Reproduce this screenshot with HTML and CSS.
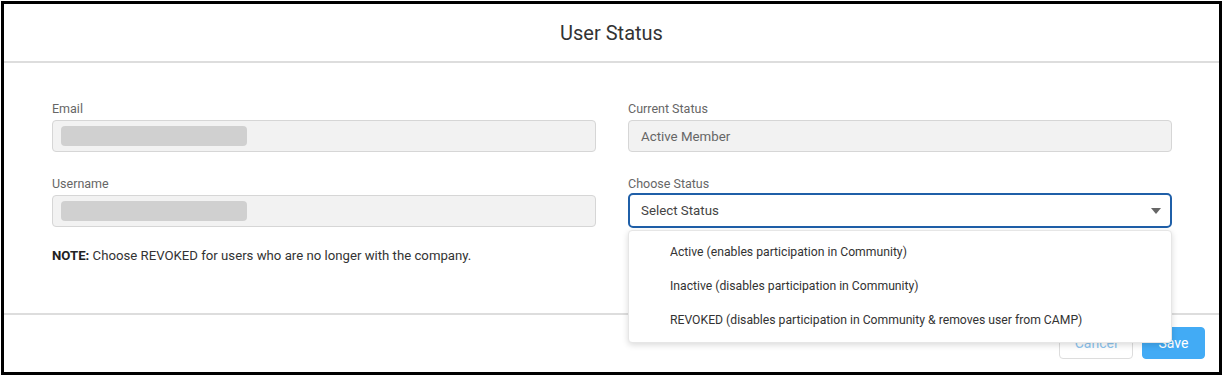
FILE: index.html
```html
<!DOCTYPE html>
<html lang="en">
<head>
    <meta charset="UTF-8">
    <meta name="viewport" content="width=device-width, initial-scale=1.0">
    <title>User Status</title>
    <link rel="stylesheet" href="styles.css">
</head>
<body>
    <div class="modal">
        <div class="modal-header">
            <h2>User Status</h2>
        </div>
        <div class="modal-body">
            <div class="form-grid">
                <div class="field">
                    <label>Email</label>
                    <div class="input readonly"><span class="redacted"></span></div>
                </div>
                <div class="field">
                    <label>Current Status</label>
                    <div class="input readonly">Active Member</div>
                </div>
                <div class="field">
                    <label>Username</label>
                    <div class="input readonly"><span class="redacted"></span></div>
                </div>
                <div class="field">
                    <label>Choose Status</label>
                    <div class="select-wrap">
                        <div class="select">
                            <span>Select Status</span>
                            <span class="caret"></span>
                        </div>
                        <ul class="menu">
                            <li>Active (enables participation in Community)</li>
                            <li>Inactive (disables participation in Community)</li>
                            <li>REVOKED (disables participation in Community &amp; removes user from CAMP)</li>
                        </ul>
                    </div>
                </div>
                <p class="note"><b>NOTE:</b> Choose REVOKED for users who are no longer with the company.</p>
            </div>
        </div>
        <div class="modal-footer">
            <button class="btn btn-cancel">Cancel</button>
            <button class="btn btn-save">Save</button>
        </div>
    </div>
</body>
</html>
```

FILE: styles.css
```css
body {
    margin: 0;
    padding: 1px;
    font-family: Roboto, "Liberation Sans", Arial, sans-serif;
    background: #fff;
    color: #333;
}
.modal {
    width: 1221px;
    height: 374px;
    box-sizing: border-box;
    border: 3px solid #000;
    display: flex;
    flex-direction: column;
}
.modal-header {
    height: 57px;
    border-bottom: 2px solid #ddd;
    display: flex;
    align-items: center;
    justify-content: center;
}
.modal-header h2 {
    margin: 0;
    font-size: 20px;
    font-weight: 400;
    color: #333;
}
.modal-body {
    height: 252px;
    box-sizing: border-box;
    padding: 38px 47px 0 48px;
    border-bottom: 2px solid #ddd;
}
.form-grid {
    display: grid;
    grid-template-columns: 544px 544px;
    column-gap: 32px;
    row-gap: 24px;
}
.field label {
    display: block;
    font-size: 12.5px;
    line-height: 16px;
    color: #666;
    margin-bottom: 3px;
}
.input {
    height: 32px;
    box-sizing: border-box;
    border: 1px solid #d6d6d6;
    border-radius: 4px;
    padding: 0 12px 0 8px;
    display: flex;
    align-items: center;
    font-size: 13.3px;
    color: #666;
}
.readonly {
    background: #f2f2f2;
}
.field:nth-child(2) .input {
    padding-left: 12px;
}
.redacted {
    display: block;
    width: 186px;
    height: 20px;
    background: #d0d0d0;
    border-radius: 4px;
}
.select-wrap {
    position: relative;
    margin-top: -2px;
}
.select {
    height: 35px;
    box-sizing: border-box;
    border: 2px solid #1f5fa8;
    border-radius: 5px;
    padding: 0 9px 0 11px;
    display: flex;
    align-items: center;
    justify-content: space-between;
    font-size: 13.3px;
    color: #444;
}
.caret {
    width: 0;
    height: 0;
    border-left: 5px solid transparent;
    border-right: 5px solid transparent;
    border-top: 6px solid #666;
}
.menu {
    position: absolute;
    top: 37px;
    left: 0;
    width: 544px;
    box-sizing: border-box;
    margin: 0;
    padding: 4px 0 5px;
    list-style: none;
    background: #fff;
    border: 1px solid #e6e6e6;
    border-radius: 4px;
    box-shadow: 0 2px 6px rgba(0, 0, 0, 0.15);
    z-index: 2;
}
.menu li {
    height: 34px;
    line-height: 34px;
    padding-left: 41px;
    font-size: 12.2px;
    color: #333;
}
.note {
    margin: -4px 0 0;
    font-size: 13.2px;
    color: #333;
}
.note b {
    color: #222;
}
.modal-footer {
    flex: 1;
    display: flex;
    justify-content: flex-end;
    align-items: flex-start;
    gap: 9px;
    padding: 12px 14px 0 0;
}
.btn {
    height: 32px;
    border-radius: 4px;
    font-family: inherit;
    font-size: 14px;
    padding: 0 14px;
    cursor: pointer;
}
.btn-cancel {
    background: #fff;
    border: 1px solid #ddd;
    color: #8cc4ee;
    width: 74px;
}
.btn-save {
    background: #42abf5;
    border: 1px solid #42abf5;
    color: #fff;
    width: 63px;
}
```
